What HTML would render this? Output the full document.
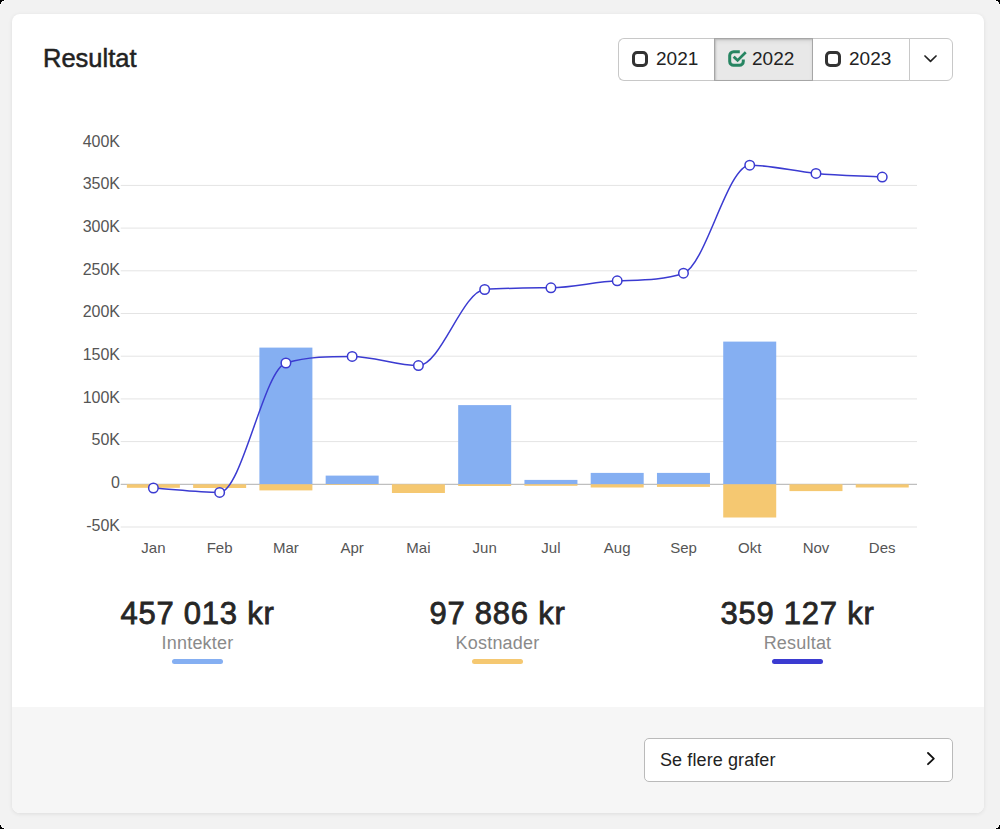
<!DOCTYPE html>
<html><head><meta charset="utf-8">
<style>
html,body{margin:0;padding:0;}
body{width:1000px;height:829px;background:#f2f2f2;position:relative;overflow:hidden;font-family:"Liberation Sans",sans-serif;color:#262626;}
.card{position:absolute;left:12px;top:14px;width:972px;height:799px;background:#fff;border-radius:8px;box-shadow:0 1px 4px rgba(0,0,0,0.09);overflow:hidden;}
.footer{position:absolute;left:0;top:693px;width:972px;height:106px;background:#f6f6f6;}
.title{position:absolute;left:43px;top:43px;font-size:25.5px;line-height:30px;color:#222;-webkit-text-stroke:0.5px #222;}
.seg{position:absolute;top:38px;height:43px;box-sizing:border-box;border:1px solid #c8c8c8;background:#fff;}
.seg span{position:absolute;left:37px;top:9px;font-size:19px;line-height:22px;color:#222;}
.yl{font-family:"Liberation Sans",sans-serif;font-size:16px;fill:#555;}
.xl{font-family:"Liberation Sans",sans-serif;font-size:15px;fill:#555;}
.sum{position:absolute;width:300px;text-align:center;}
.sum .v{position:absolute;left:0;width:300px;top:596px;font-size:31px;line-height:36px;color:#262626;-webkit-text-stroke:0.8px #262626;letter-spacing:0.75px;}
.sum .l{position:absolute;left:0;width:300px;top:633px;font-size:18px;line-height:20px;color:#8a8a8a;letter-spacing:0.2px;}
.sum .u{position:absolute;top:659px;left:124px;width:51px;height:5px;border-radius:3px;}
.btn{position:absolute;left:644px;top:738px;width:309px;height:44px;box-sizing:border-box;border:1px solid #bababa;border-radius:5px;background:#fff;}
.btn span{position:absolute;left:15px;top:10px;font-size:18px;line-height:22px;color:#222;letter-spacing:0.1px;}
</style></head><body>
<div class="card"><div class="footer"></div></div>
<div class="title">Resultat</div>
<!-- year selector -->
<div class="seg" style="left:618px;width:97px;border-radius:6px 0 0 6px;border-right:none;">
  <svg width="18" height="18" style="position:absolute;left:13px;top:12px" viewBox="0 0 18 18"><rect x="1.5" y="1.5" width="13" height="13" rx="3.6" fill="none" stroke="#333" stroke-width="3"/></svg>
  <span>2021</span></div>
<div class="seg" style="z-index:2;left:714px;width:99px;background:#e8e8e8;border-color:#a6a6a6;box-shadow:inset 1px 1px 2px rgba(0,0,0,0.16), inset 0 3px 4px rgba(0,0,0,0.05);">
  <svg width="20" height="19" style="position:absolute;left:13px;top:11px" viewBox="0 0 20 19"><path d="M11.8,1.7 H5.6 A3.9,3.9 0 0 0 1.7,5.6 V11.4 A3.9,3.9 0 0 0 5.6,15.3 H11.4 A3.9,3.9 0 0 0 15.3,11.4 V9.4" fill="none" stroke="#278562" stroke-width="3"/><path d="M6.6,7.6 L9.6,10.4 L16.8,3.2" fill="none" stroke="#278562" stroke-width="2.7" stroke-linecap="square" stroke-linejoin="miter"/></svg>
  <span>2022</span></div>
<div class="seg" style="left:812px;width:98px;border-left:none;">
  <svg width="18" height="18" style="position:absolute;left:13px;top:12px" viewBox="0 0 18 18"><rect x="1.5" y="1.5" width="13" height="13" rx="3.6" fill="none" stroke="#333" stroke-width="3"/></svg>
  <span>2023</span></div>
<div class="seg" style="left:909px;width:44px;border-radius:0 6px 6px 0;">
  <svg width="14" height="9" style="position:absolute;left:14px;top:16px" viewBox="0 0 14 9"><path d="M1,1 L6.5,6.3 L12,1" fill="none" stroke="#222" stroke-width="1.7" stroke-linecap="round" stroke-linejoin="round"/></svg>
</div>
<svg width="1000" height="829" style="position:absolute;left:0;top:0">
<rect x="120.7" y="184.90" width="796.3" height="1" fill="#e4e4e4"/>
<rect x="120.7" y="227.60" width="796.3" height="1" fill="#e4e4e4"/>
<rect x="120.7" y="270.30" width="796.3" height="1" fill="#e4e4e4"/>
<rect x="120.7" y="313.00" width="796.3" height="1" fill="#e4e4e4"/>
<rect x="120.7" y="355.70" width="796.3" height="1" fill="#e4e4e4"/>
<rect x="120.7" y="398.40" width="796.3" height="1" fill="#e4e4e4"/>
<rect x="120.7" y="441.10" width="796.3" height="1" fill="#e4e4e4"/>
<rect x="120.7" y="526.50" width="796.3" height="1" fill="#e4e4e4"/>
<text x="120" y="146.5" text-anchor="end" class="yl">400K</text>
<text x="120" y="189.2" text-anchor="end" class="yl">350K</text>
<text x="120" y="231.9" text-anchor="end" class="yl">300K</text>
<text x="120" y="274.6" text-anchor="end" class="yl">250K</text>
<text x="120" y="317.3" text-anchor="end" class="yl">200K</text>
<text x="120" y="360.0" text-anchor="end" class="yl">150K</text>
<text x="120" y="402.7" text-anchor="end" class="yl">100K</text>
<text x="120" y="445.4" text-anchor="end" class="yl">50K</text>
<text x="120" y="488.1" text-anchor="end" class="yl">0</text>
<text x="120" y="530.8" text-anchor="end" class="yl">-50K</text>
<rect x="120.7" y="483.80" width="796.3" height="1" fill="#b0b0b0"/>
<rect x="126.88" y="484.30" width="53.00" height="3.50" fill="#f5c871"/>
<rect x="193.14" y="484.30" width="53.00" height="3.70" fill="#f5c871"/>
<rect x="259.40" y="347.60" width="53.00" height="136.70" fill="#85aff2"/>
<rect x="259.40" y="484.30" width="53.00" height="6.10" fill="#f5c871"/>
<rect x="325.66" y="475.60" width="53.00" height="8.70" fill="#85aff2"/>
<rect x="325.66" y="484.30" width="53.00" height="0.70" fill="#f5c871"/>
<rect x="391.92" y="484.30" width="53.00" height="8.70" fill="#f5c871"/>
<rect x="458.18" y="405.10" width="53.00" height="79.20" fill="#85aff2"/>
<rect x="458.18" y="484.30" width="53.00" height="1.70" fill="#f5c871"/>
<rect x="524.44" y="479.90" width="53.00" height="4.40" fill="#85aff2"/>
<rect x="524.44" y="484.30" width="53.00" height="1.50" fill="#f5c871"/>
<rect x="590.70" y="472.90" width="53.00" height="11.40" fill="#85aff2"/>
<rect x="590.70" y="484.30" width="53.00" height="3.20" fill="#f5c871"/>
<rect x="656.96" y="472.90" width="53.00" height="11.40" fill="#85aff2"/>
<rect x="656.96" y="484.30" width="53.00" height="2.60" fill="#f5c871"/>
<rect x="723.22" y="341.60" width="53.00" height="142.70" fill="#85aff2"/>
<rect x="723.22" y="484.30" width="53.00" height="33.20" fill="#f5c871"/>
<rect x="789.48" y="484.30" width="53.00" height="6.80" fill="#f5c871"/>
<rect x="855.74" y="484.30" width="53.00" height="3.20" fill="#f5c871"/>
<text x="153.4" y="553.4" text-anchor="middle" class="xl">Jan</text>
<text x="219.6" y="553.4" text-anchor="middle" class="xl">Feb</text>
<text x="285.9" y="553.4" text-anchor="middle" class="xl">Mar</text>
<text x="352.2" y="553.4" text-anchor="middle" class="xl">Apr</text>
<text x="418.4" y="553.4" text-anchor="middle" class="xl">Mai</text>
<text x="484.7" y="553.4" text-anchor="middle" class="xl">Jun</text>
<text x="550.9" y="553.4" text-anchor="middle" class="xl">Jul</text>
<text x="617.2" y="553.4" text-anchor="middle" class="xl">Aug</text>
<text x="683.5" y="553.4" text-anchor="middle" class="xl">Sep</text>
<text x="749.7" y="553.4" text-anchor="middle" class="xl">Okt</text>
<text x="816.0" y="553.4" text-anchor="middle" class="xl">Nov</text>
<text x="882.2" y="553.4" text-anchor="middle" class="xl">Des</text>
<path d="M153.38,488.00C175.47,489.47 197.55,492.40 219.64,492.40C241.73,492.40 263.81,369.60 285.90,363.00C307.99,356.40 330.07,356.40 352.16,356.40C374.25,356.40 396.33,365.60 418.42,365.60C440.51,365.60 462.59,291.19 484.68,289.50C506.77,287.81 528.85,287.99 550.94,287.80C573.03,287.61 595.11,281.75 617.20,280.80C639.29,279.85 661.37,280.74 683.46,273.20C705.55,265.66 727.63,165.20 749.72,165.20C771.81,165.20 793.89,171.42 815.98,173.40C838.07,175.38 860.15,175.87 882.24,177.10" fill="none" stroke="#3b3bd1" stroke-width="1.5"/>
<circle cx="153.38" cy="488.00" r="4.75" fill="#fff" stroke="#3b3bd1" stroke-width="1.5"/>
<circle cx="219.64" cy="492.40" r="4.75" fill="#fff" stroke="#3b3bd1" stroke-width="1.5"/>
<circle cx="285.90" cy="363.00" r="4.75" fill="#fff" stroke="#3b3bd1" stroke-width="1.5"/>
<circle cx="352.16" cy="356.40" r="4.75" fill="#fff" stroke="#3b3bd1" stroke-width="1.5"/>
<circle cx="418.42" cy="365.60" r="4.75" fill="#fff" stroke="#3b3bd1" stroke-width="1.5"/>
<circle cx="484.68" cy="289.50" r="4.75" fill="#fff" stroke="#3b3bd1" stroke-width="1.5"/>
<circle cx="550.94" cy="287.80" r="4.75" fill="#fff" stroke="#3b3bd1" stroke-width="1.5"/>
<circle cx="617.20" cy="280.80" r="4.75" fill="#fff" stroke="#3b3bd1" stroke-width="1.5"/>
<circle cx="683.46" cy="273.20" r="4.75" fill="#fff" stroke="#3b3bd1" stroke-width="1.5"/>
<circle cx="749.72" cy="165.20" r="4.75" fill="#fff" stroke="#3b3bd1" stroke-width="1.5"/>
<circle cx="815.98" cy="173.40" r="4.75" fill="#fff" stroke="#3b3bd1" stroke-width="1.5"/>
<circle cx="882.24" cy="177.10" r="4.75" fill="#fff" stroke="#3b3bd1" stroke-width="1.5"/>
</svg>
<div class="sum" style="left:47.5px;top:0"><div class="v">457 013 kr</div><div class="l">Inntekter</div><div class="u" style="background:#85aff2"></div></div>
<div class="sum" style="left:347.5px;top:0"><div class="v">97 886 kr</div><div class="l">Kostnader</div><div class="u" style="background:#f5c871"></div></div>
<div class="sum" style="left:647.5px;top:0"><div class="v">359 127 kr</div><div class="l">Resultat</div><div class="u" style="background:#3b3bd1"></div></div>
<div class="btn"><span>Se flere grafer</span>
  <svg width="9" height="14" style="position:absolute;left:282px;top:13px" viewBox="0 0 9 14"><path d="M1,1 L6.8,6.6 L1,12.2" fill="none" stroke="#111" stroke-width="1.8" stroke-linecap="round" stroke-linejoin="round"/></svg>
</div>
<svg width="1000" height="829" style="position:absolute;left:0;top:0;pointer-events:none">
<g id="c"><rect x="0" y="0" width="4" height="1" fill="#000"/><rect x="0" y="1" width="2" height="1" fill="#000"/><rect x="0" y="2" width="1.3" height="1" fill="#000"/><rect x="0" y="3" width="1" height="1" fill="#000"/>
<rect x="4" y="0" width="1" height="1" fill="#fff"/><rect x="2" y="1" width="2" height="1" fill="#fff"/><rect x="1.3" y="2" width="1" height="2" fill="#fff"/><rect x="0" y="4" width="1" height="1" fill="#fff"/></g>
<use href="#c" transform="translate(1000,0) scale(-1,1)"/>
<use href="#c" transform="translate(0,829) scale(1,-1)"/>
<use href="#c" transform="translate(1000,829) scale(-1,-1)"/>
</svg>
</body></html>
